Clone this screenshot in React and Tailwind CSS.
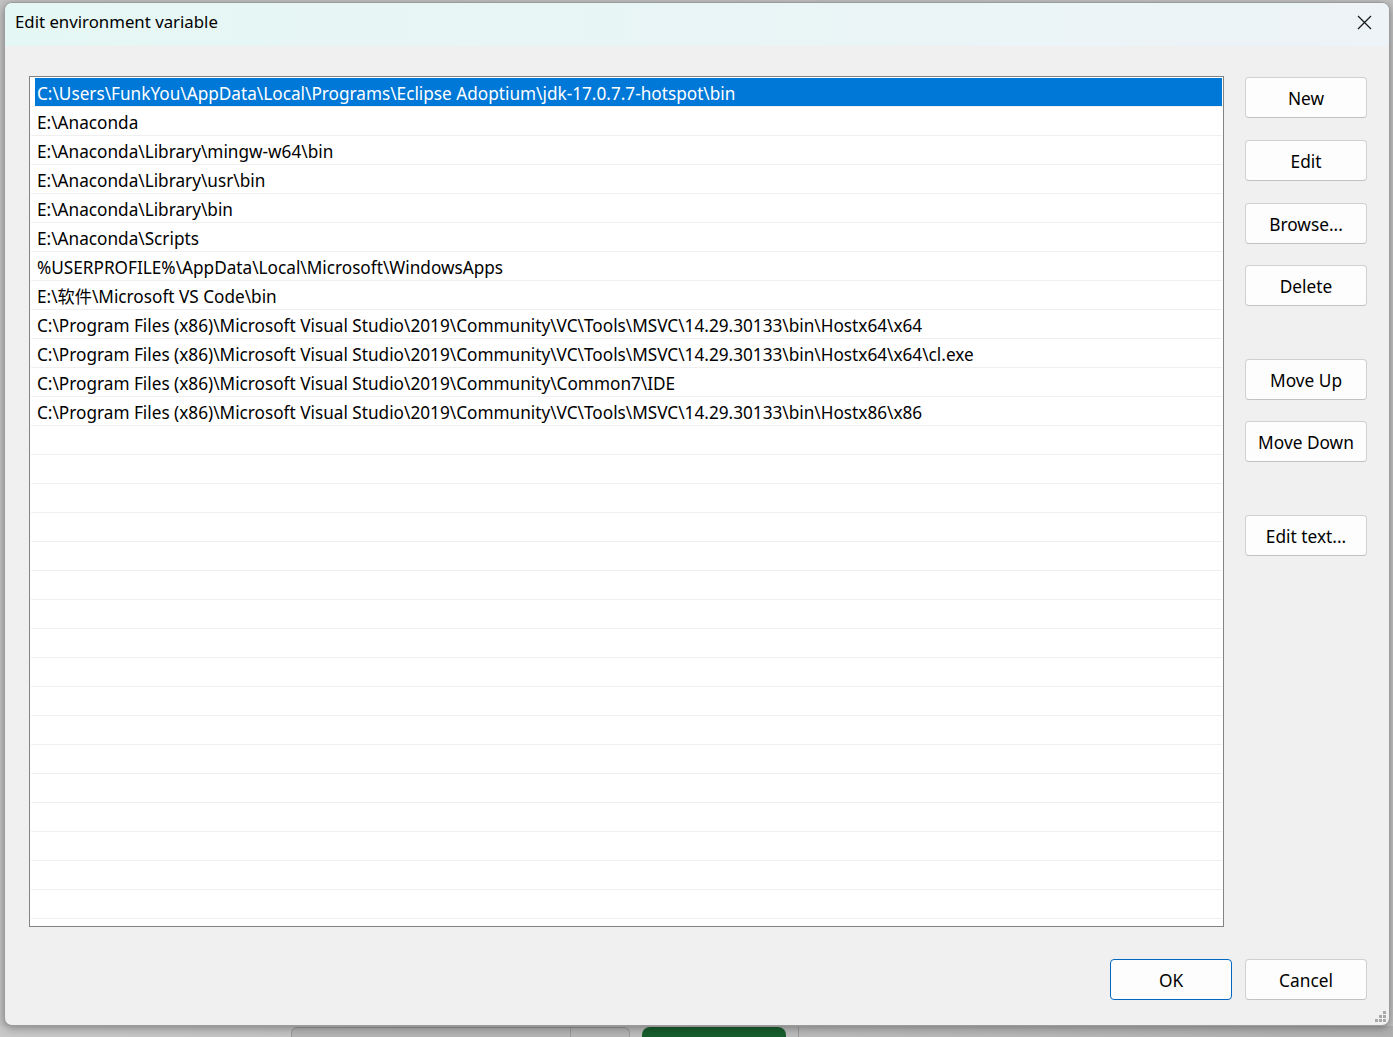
import React from 'react';

const PATHS = [
  'C:\\Users\\FunkYou\\AppData\\Local\\Programs\\Eclipse Adoptium\\jdk-17.0.7.7-hotspot\\bin',
  'E:\\Anaconda',
  'E:\\Anaconda\\Library\\mingw-w64\\bin',
  'E:\\Anaconda\\Library\\usr\\bin',
  'E:\\Anaconda\\Library\\bin',
  'E:\\Anaconda\\Scripts',
  '%USERPROFILE%\\AppData\\Local\\Microsoft\\WindowsApps',
  'E:\\软件\\Microsoft VS Code\\bin',
  'C:\\Program Files (x86)\\Microsoft Visual Studio\\2019\\Community\\VC\\Tools\\MSVC\\14.29.30133\\bin\\Hostx64\\x64',
  'C:\\Program Files (x86)\\Microsoft Visual Studio\\2019\\Community\\VC\\Tools\\MSVC\\14.29.30133\\bin\\Hostx64\\x64\\cl.exe',
  'C:\\Program Files (x86)\\Microsoft Visual Studio\\2019\\Community\\Common7\\IDE',
  'C:\\Program Files (x86)\\Microsoft Visual Studio\\2019\\Community\\VC\\Tools\\MSVC\\14.29.30133\\bin\\Hostx86\\x86',
];

const ROWS = [...PATHS, ...Array(17).fill('')];

const font = { fontFamily: '"Noto Sans", "Noto Sans CJK SC", sans-serif' };

const Button = ({ children, primary, className = '' }) => (
  <button
    className={`w-[122px] h-[41px] rounded-[4px] bg-[#fdfdfd] text-[17.3px] text-black flex items-center justify-center pt-[2px] ${
      primary ? 'border border-[#0067c0]' : 'border border-[#d0d0d0] border-b-[#c2c2c2]'
    } ${className}`}
  >
    {children}
  </button>
);

const ResizeGrip = () => (
  <svg width="12" height="12" viewBox="0 0 12 12" className="absolute right-[2px] bottom-[2px]">
    {[
      [8, 0],
      [4, 4],
      [8, 4],
      [0, 8],
      [4, 8],
      [8, 8],
    ].map(([x, y]) => (
      <rect key={`${x}-${y}`} x={x} y={y} width="3" height="3" fill="#a8a8a8" />
    ))}
  </svg>
);

export default function App() {
  return (
    <div className="w-[1393px] h-[1037px] bg-[#c3c3c3] overflow-hidden flex flex-col" style={font}>
      <div className="ml-[4px] mt-[2px] w-[1386px] h-[1024px] relative bg-[#f0f0f0] border border-[#9c9c9c] rounded-[8px] shadow-[0_2px_8px_rgba(0,0,0,0.35)] flex flex-col overflow-hidden">
        {/* title bar */}
        <div className="h-[43px] shrink-0 flex items-center justify-between bg-gradient-to-r from-[#e5f7f4] to-[#edf3f7] pl-[10px] pr-[17px]">
          <span className="text-[16.8px] text-black leading-none -mt-[5px]">Edit environment variable</span>
          <svg width="15" height="15" viewBox="0 0 15 15" className="-mt-[4px]">
            <path d="M1 1 L14 14 M14 1 L1 14" stroke="#1a1a1a" strokeWidth="1.3" fill="none" />
          </svg>
        </div>

        {/* body */}
        <div className="flex flex-col pt-[30px] pl-[24px] pr-[22px]">
          <div className="flex gap-[21px]">
            <div className="w-[1195px] h-[851px] bg-white border border-[#838383] p-[1px] overflow-hidden">
              {ROWS.map((text, i) => (
                <div key={i} className="h-[29px] border-b border-[#efefef] flex">
                  {i === 0 ? (
                    <div className="flex-1 ml-[4px] h-[28px] bg-[#0078d7] text-white text-[17.2px] flex items-center pt-[4px] pl-[2px] whitespace-nowrap">
                      {text}
                    </div>
                  ) : (
                    <div className="flex-1 h-[28px] text-black text-[17.2px] flex items-center pt-[4px] pl-[6px] whitespace-nowrap">
                      {text}
                    </div>
                  )}
                </div>
              ))}
            </div>

            <div className="flex flex-col pt-[1px]">
              <Button>New</Button>
              <Button className="mt-[22px]">Edit</Button>
              <Button className="mt-[22px]">Browse...</Button>
              <Button className="mt-[21px]">Delete</Button>
              <Button className="mt-[53px]">Move Up</Button>
              <Button className="mt-[21px]">Move Down</Button>
              <Button className="mt-[53px]">Edit text...</Button>
            </div>
          </div>

          <div className="flex justify-end gap-[13px] mt-[32px]">
            <Button primary>OK</Button>
            <Button>Cancel</Button>
          </div>
        </div>

        <ResizeGrip />
      </div>

      {/* desktop strip behind the dialog */}
      <div className="flex-1 flex items-end bg-gradient-to-r from-[#c8c8c8] to-[#b0b0b0]">
        <div className="ml-[291px] w-[339px] h-[10px] border border-b-0 border-[#999] rounded-t-[6px] bg-[#b4b4b4] flex">
          <div className="w-[279px] h-full border-r border-[#999]" />
        </div>
        <div className="ml-[12px] w-[144px] h-[10px] rounded-t-[8px] bg-[#185e2d]" />
        <div className="ml-[12px] h-[10px] border-l border-[#999]" />
      </div>
    </div>
  );
}
